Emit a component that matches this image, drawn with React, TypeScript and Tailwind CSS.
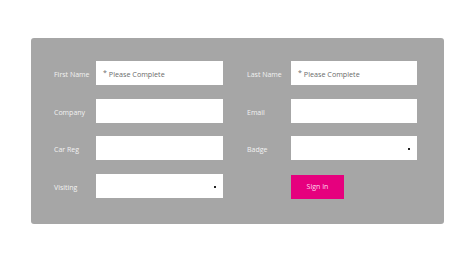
const Field = ({ label, placeholder, select }: { label: string; placeholder?: string; select?: boolean }) => (
  <div className="flex items-center">
    <label className="shrink-0 text-[7px] text-[#f2f2f2] w-[42px] pt-[5px]">{label}</label>
    <div className="relative h-6 flex-1 bg-white flex items-center px-[7px] pt-[3px] text-[7.2px] text-[#6b6b6b]">
      {placeholder && (
        <span>
          <span className="relative -top-[2px] mr-[2px] text-[7px]">*</span>
          {placeholder}
        </span>
      )}
      {select && <span className="absolute right-[7px] top-[12px] w-[2px] h-[2px] bg-[#222]" />}
    </div>
  </div>
);

export default function App() {
  return (
    <div className="w-[474px] h-[271px] bg-white pt-[38px] pl-[31px]" style={{ fontFamily: '"Open Sans", "Liberation Sans", sans-serif' }}>
      <div className="w-[413px] h-[186px] bg-[#a6a6a6] rounded-[3px] pt-[23px] pl-[23px] pr-[27px]">
        <div className="grid grid-cols-[169px_170px] gap-x-[24px] gap-y-[13.5px]">
          <Field label="First Name" placeholder="Please Complete" />
          <div className="[&_label]:w-[44px]">
            <Field label="Last Name" placeholder="Please Complete" />
          </div>
          <Field label="Company" />
          <div className="[&_label]:w-[44px]">
            <Field label="Email" />
          </div>
          <Field label="Car Reg" />
          <div className="[&_label]:w-[44px]">
            <Field label="Badge" select />
          </div>
          <Field label="Visiting" select />
          <div className="flex pl-[44px]">
            <button className="w-[53px] h-6 mt-[1px] pt-[2px] bg-[#e6007e] text-[7px] text-[#ffd9ee]">Sign In</button>
          </div>
        </div>
      </div>
    </div>
  );
}
